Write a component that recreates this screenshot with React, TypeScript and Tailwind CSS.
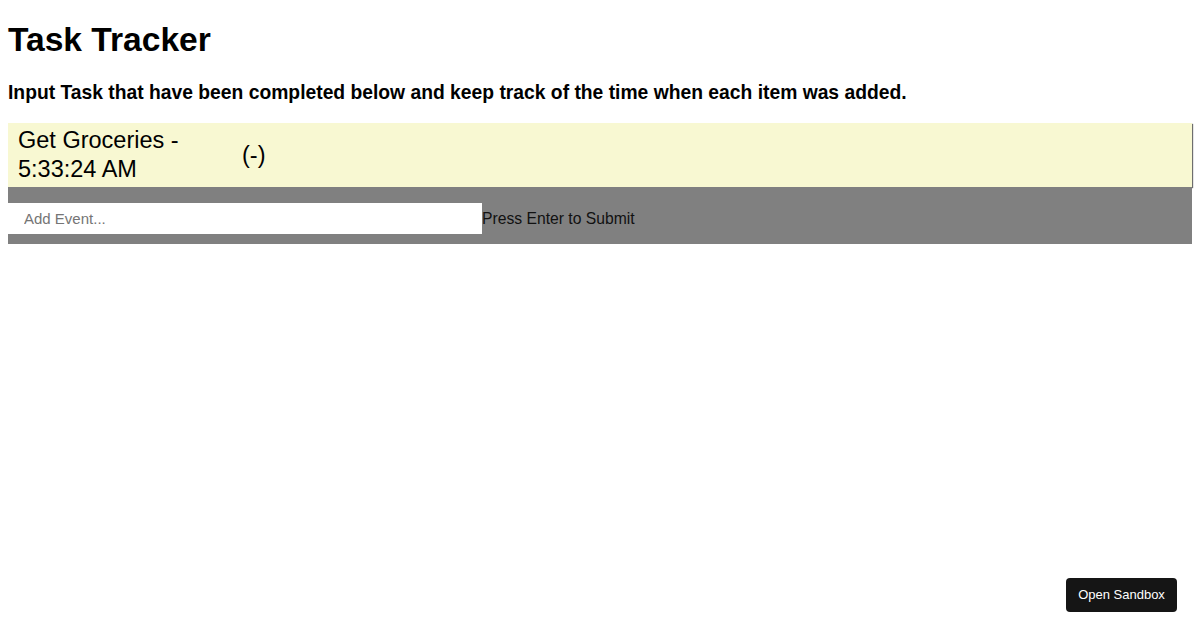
export default function App() {
  return (
    <div className="relative min-h-[630px] bg-white p-2 font-['Liberation_Sans',Arial,sans-serif] text-black">
      <h1 className="mt-[13px] text-[33.6px] leading-[37px] font-bold">Task Tracker</h1>
      <h3 className="mt-[24px] text-[19.3px] leading-[22px] font-bold">
        Input Task that have been completed below and keep track of the time when each item was added.
      </h3>
      <div className="mt-[19px]">
        <div className="flex h-[64px] items-center bg-[#f8f8d2] pl-[10px] shadow-[1px_1px_1px_#6e6e6e]">
          <div className="w-[224px] text-[23.5px] leading-[29px]">Get Groceries - 5:33:24 AM</div>
          <div className="text-[23.5px] leading-[29px]">(-)</div>
        </div>
        <div className="flex items-center bg-[#808080] pt-4 pb-[10px]">
          <input
            className="h-[31px] w-[474px] bg-white pl-4 text-[15px] text-black outline-none placeholder:text-[#757575]"
            placeholder="Add Event..."
          />
          <span className="text-[15.7px] text-[#111]">Press Enter to Submit</span>
        </div>
      </div>
      <button className="absolute right-[23px] bottom-[18px] h-[34px] w-[111px] rounded-[4px] bg-[#151515] text-[13px] text-white">
        Open Sandbox
      </button>
    </div>
  );
}
